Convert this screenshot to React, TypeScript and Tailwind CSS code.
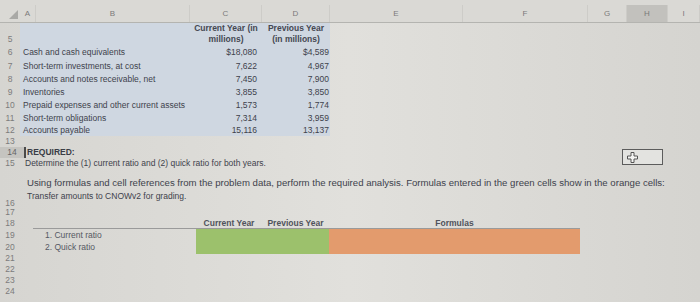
import React from "react";

const cols = [
  { l: "A", w: "w-[16px]" },
  { l: "B", w: "w-[154px]" },
  { l: "C", w: "w-[72px]" },
  { l: "D", w: "w-[68px]" },
  { l: "E", w: "w-[133px]" },
  { l: "F", w: "w-[125px]" },
  { l: "G", w: "w-[39px]" },
  { l: "H", w: "w-[41px]" },
  { l: "I", w: "w-[32px]" },
];

const data = [
  { n: 6, label: "Cash and cash equivalents", cur: "$18,080", prev: "$4,589", h: "h-[14px]" },
  { n: 7, label: "Short-term investments, at cost", cur: "7,622", prev: "4,967", h: "h-[14px]" },
  { n: 8, label: "Accounts and notes receivable, net", cur: "7,450", prev: "7,900", h: "h-[13px]" },
  { n: 9, label: "Inventories", cur: "3,855", prev: "3,850", h: "h-[13px]" },
  { n: 10, label: "Prepaid expenses and other current assets", cur: "1,573", prev: "1,774", h: "h-[13px]" },
  { n: 11, label: "Short-term obligations", cur: "7,314", prev: "3,959", h: "h-[12px]" },
  { n: 12, label: "Accounts payable", cur: "15,116", prev: "13,137", h: "h-[12px]" },
];

const RowNum = ({ n, className = "" }: { n: number; className?: string }) => (
  <div
    className={`w-[20px] shrink-0 flex items-center justify-center text-[8.5px] text-[#7c7c7c] ${className}`}
  >
    {n}
  </div>
);

const App = () => {
  return (
    <div className="relative w-[700px] h-[302px] overflow-hidden bg-gradient-to-r from-[#d6d5d1] via-[#e1e0dc] to-[#d5d4d0] font-['Liberation_Sans',Arial,sans-serif] text-[#3e424c] text-[8.5px] leading-none">
      {/* column headers */}
      <div className="flex h-[23px] pt-[5px] bg-[#dad9d5] border-b border-[#b4b4b0]">
        <div className="w-[20px] flex items-end justify-end pr-[2px] pb-[3px]">
          <svg width="9" height="9" viewBox="0 0 9 9">
            <polygon points="9,0 9,9 0,9" fill="#a9a9a6" />
          </svg>
        </div>
        {cols.map((c) => (
          <div
            key={c.l}
            className={`${c.w} flex items-center justify-center text-[8px] text-[#7a7a7a] border-r border-[#cdccc8] ${
              c.l === "H" ? "bg-[#c2c1bd]" : ""
            }`}
          >
            {c.l}
          </div>
        ))}
      </div>

      {/* row 5 */}
      <div className="flex h-[22px]">
        <RowNum n={5} className="items-end pb-[2px]" />
        <div className="flex w-[310px] bg-[#cfd7e1] font-bold text-[#454852]">
          <div className="w-[170px]" />
          <div className="w-[72px] flex flex-col items-center justify-center leading-[11px]">
            <span>Current Year (in</span>
            <span>millions)</span>
          </div>
          <div className="w-[68px] flex flex-col items-center justify-center leading-[11px]">
            <span>Previous Year</span>
            <span>(in millions)</span>
          </div>
        </div>
      </div>

      {data.map((r) => (
        <div key={r.n} className={`flex ${r.h}`}>
          <RowNum n={r.n} />
          <div className="flex items-center w-[310px] bg-[#cfd7e1]">
            <div className="w-[170px] pl-[3px] whitespace-nowrap">{r.label}</div>
            <div className="w-[72px] text-right pr-[5px]">{r.cur}</div>
            <div className="w-[68px] text-right pr-[1px]">{r.prev}</div>
          </div>
        </div>
      ))}

      {/* row 13 */}
      <div className="flex h-[11px]">
        <RowNum n={13} />
      </div>

      {/* row 14 */}
      <div className="flex h-[11px]">
        <div className="w-[24px] shrink-0 flex items-center justify-center bg-[#c5c4c0] text-[8.5px] text-[#666]">
          14
        </div>
        <div className="flex items-center border-l-2 border-[#4a4a4a] pl-[1px] font-bold text-[#3a3d46]">
          REQUIRED:
        </div>
      </div>

      {/* row 15 */}
      <div className="flex h-[10px]">
        <RowNum n={15} />
        <div className="flex items-center pl-[5px] whitespace-nowrap">
          Determine the (1) current ratio and (2) quick ratio for both years.
        </div>
      </div>

      {/* row 16 */}
      <div className="flex h-[40px]">
        <RowNum n={16} className="items-end pb-[1px]" />
        <div className="pl-[7px] pt-[9px] leading-[12.5px] whitespace-nowrap">
          <div className="text-[9.6px]">
            Using formulas and cell references from the problem data, perform the required analysis.
            Formulas entered in the green cells show in the orange cells:
          </div>
          <div>Transfer amounts to CNOWv2 for grading.</div>
        </div>
      </div>

      {/* row 17 */}
      <div className="flex h-[9px]">
        <RowNum n={17} />
      </div>

      {/* row 18 */}
      <div className="flex h-[12px]">
        <RowNum n={18} />
        <div className="flex items-end ml-[13px] w-[547px] border-b border-[#9a9a9a] pb-[1px] font-bold text-[#50535c]">
          <div className="w-[163px]" />
          <div className="w-[66px] text-center">Current Year</div>
          <div className="w-[67px] text-center">Previous Year</div>
          <div className="w-[251px] text-center">Formulas</div>
        </div>
      </div>

      {/* rows 19-20 */}
      <div className="flex h-[25px]">
        <div className="flex flex-col">
          <RowNum n={19} className="h-[12px]" />
          <RowNum n={20} className="h-[13px]" />
        </div>
        <div className="w-[176px] flex flex-col pl-[25px] text-[#555863]">
          <div className="h-[12px] flex items-center">1. Current ratio</div>
          <div className="h-[13px] flex items-center">2. Quick ratio</div>
        </div>
        <div className="w-[133px] bg-[#9cc16c]" />
        <div className="w-[251px] bg-[#e39b6d]" />
      </div>

      <div className="flex h-[9px]">
        <RowNum n={21} />
      </div>
      <div className="flex h-[12px]">
        <RowNum n={22} />
      </div>
      <div className="flex h-[11px]">
        <RowNum n={23} />
      </div>
      <div className="flex h-[11px]">
        <RowNum n={24} />
      </div>

      {/* floating button object */}
      <div className="absolute left-[622px] top-[149px] w-[41px] h-[16px] border border-[#5c5c5c] bg-[#e3e3e0] flex items-end pl-[4px] pb-[1px]">
        <svg width="11" height="11" viewBox="0 0 11 11">
          <path
            d="M4 0.5h3v3.5h3.5v3h-3.5v3.5h-3v-3.5h-3.5v-3h3.5z"
            fill="#f4f4f2"
            stroke="#555"
            strokeWidth="1"
          />
        </svg>
      </div>
    </div>
  );
};

export default App;
